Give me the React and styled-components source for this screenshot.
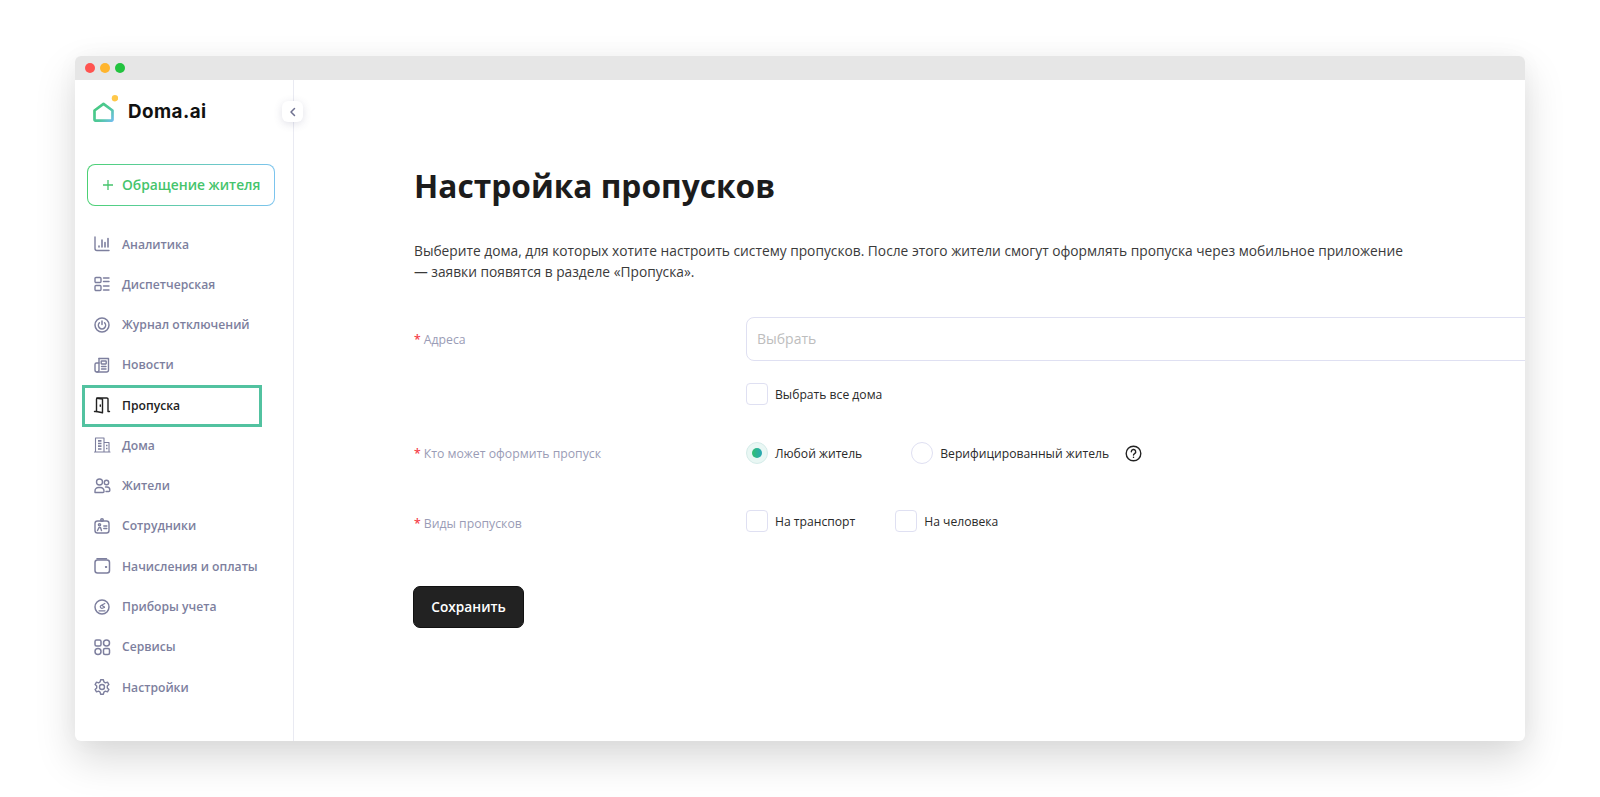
import React from "react";
import styled, { createGlobalStyle } from "styled-components";

const Global = createGlobalStyle`
  html, body { margin: 0; padding: 0; background: #fff; }
  body { font-family: "Open Sans", "Noto Sans", sans-serif; }
  * { box-sizing: border-box; }
`;
const Page = styled.div`
  width: 1600px; height: 797px; padding: 56px 75px 0 75px; overflow: hidden; background: #fff;
`;
const Win = styled.div`
  width: 1450px; height: 685px; border-radius: 6px; background: #fff;
  box-shadow: 0 18px 40px rgba(0,0,0,.15), 0 0 24px rgba(0,0,0,.03);
  display: flex; flex-direction: column;
`;
const TitleBar = styled.div`
  height: 24px; flex: none; background: #e6e6e6; border-radius: 6px 6px 0 0;
  display: flex; align-items: center; gap: 5px; padding-left: 10px;
`;
const Dot = styled.span`
  width: 10px; height: 10px; border-radius: 50%; background: ${p => p.$c};
`;
const Body = styled.div`
  flex: 1; display: flex; min-height: 0; border-radius: 0 0 6px 6px; overflow: hidden;
`;
const Side = styled.aside`
  width: 219px; flex: none; border-right: 1px solid #e9eaf2; padding: 15px 0 0 0; position: relative;
`;
const Logo = styled.div`
  display: flex; align-items: center; height: 33px; padding-left: 18px; gap: 10px;
`;
const LogoText = styled.span`
  font-family: Inter, sans-serif; font-weight: 700; font-size: 18.800px; color: #111; letter-spacing: .45px;
`;
const Collapse = styled.div`
  position: absolute; left: 207px; top: 21px; width: 21px; height: 21px; border-radius: 6px; background: #fff;
  box-shadow: 0 2px 8px rgba(70,70,110,.16); display: flex; align-items: center; justify-content: center; z-index: 2;
`;
const AddBtn = styled.div`
  margin: 36px 0 0 12px; width: 188px; height: 41.500px; border-radius: 8px; border: 1px solid transparent;
  background: linear-gradient(#fff,#fff) padding-box, linear-gradient(90deg,#4cd174,#7cc4ee) border-box;
  display: flex; align-items: center; padding-left: 15px; gap: 9px;
  color: #45c46c; font-size: 13.800px; font-weight: 600;
`;
const Nav = styled.nav`
  margin-top: 18.500px; display: flex; flex-direction: column;
`;
const Item = styled.div`
  height: 40.270px; display: flex; align-items: center; gap: 11px; padding-left: 18px; flex: none; position: relative;
  font-size: 12.150px; font-weight: 600; color: ${p => p.$active ? "#222" : "#7d7f9e"};
  svg { flex: none; color: ${p => p.$active ? "#222" : "#7d7f9e"}; }
`;
const Mark = styled.span`
  position: absolute; left: 7px; top: -0.500px; width: 180px; height: 42px; border: 3px solid #52c2a0;
`;
const Main = styled.main`
  flex: 1; min-width: 0; overflow: hidden; padding: 82px 0 0 120px;
`;
const Title = styled.h1`
  margin: 0; font-size: 31.700px; line-height: 47px; font-weight: 700; color: #1c1c1c; white-space: nowrap;
`;
const Lead = styled.p`
  margin: 31px 0 0; width: 1000px; font-size: 13.760px; line-height: 21px; color: #3a3a3a;
`;
const Row = styled.div`
  display: grid; grid-template-columns: 332px 1fr; margin-top: ${p => p.$mt}px; align-items: ${p => p.$align || "center"};
`;
const Label = styled.label`
  font-size: 12.250px; color: #9a9cb6; font-weight: 400; padding-top: ${p => p.$pt || 0}px;
  b { color: #f5404a; font-weight: 600; margin-right: 3px; }
`;
const Select = styled.div`
  width: 800px; height: 44px; border: 1px solid #dfe0f2; border-radius: 8px; padding: 0 0 2px 10px;
  display: flex; align-items: center; font-size: 14px; color: #bdbdbd;
`;
const Options = styled.div`
  display: flex; align-items: center; gap: ${p => p.$gap || 0}px;
`;
const Opt = styled.span`
  display: inline-flex; align-items: center; gap: 7px; font-size: 12.150px; color: #2a2a2a;
  margin-left: ${p => p.$ml || 0}px;
`;
const Check = styled.span`
  width: 22px; height: 22px; border: 1px solid #dfe0f2; border-radius: 4px; flex: none;
`;
const Radio = styled.span`
  width: 22px; height: 22px; border-radius: 50%; flex: none; display: flex; align-items: center; justify-content: center;
  border: 1px solid ${p => p.$on ? "#d5ece9" : "#dfe0f2"}; background: ${p => p.$on ? "#e9f7f4" : "#fff"};
  &::after { content: ""; display: ${p => p.$on ? "block" : "none"}; width: 10px; height: 10px; border-radius: 50%;
    background: linear-gradient(90deg,#2fbf71,#2aa7b5); }
`;
const Help = styled.svg`
  margin-left: 16px;
`;
const Save = styled.button`
  margin-top: 54px; display: block; width: 111px; height: 41.500px; margin-left: -1px; background: #222; color: #fff; border: 1px solid #111; border-radius: 7px;
  font-family: inherit; font-size: 13.700px; font-weight: 600; padding: 0;
`;

const S = p => (
  <svg width="18" height="18" viewBox="0 0 18 18" fill="none" stroke="currentColor" strokeWidth="1.400" strokeLinecap="round" strokeLinejoin="round" {...p} />
);
const icons = {
  chart: <S><path d="M2 2v11.500a2 2 0 0 0 2 2h12" /><path d="M6 12v-1M9 12V5M12 12V7.500M15 12V3.500" strokeWidth="1.600" /></S>,
  disp: <S><rect x="2" y="2.500" width="6" height="5" rx="1" /><rect x="2" y="10.500" width="6" height="5" rx="1" /><path d="M10.500 3h5.500M10.500 6.500h5.500M10.500 11h5.500M10.500 15h5.500" /></S>,
  power: <S strokeWidth="1.500"><circle cx="9" cy="9" r="7" /><path d="M6.400 6.800a3.600 3.600 0 1 0 5.200 0M9 5v3.500" /></S>,
  news: <S><path d="M6 2.500h9.500v11.500a2 2 0 0 1-2 2H4a2 2 0 0 1-2-2V8.500a1.500 1.500 0 0 1 1.500-1.500H6" /><path d="M6 2.500V14a2 2 0 0 1-2 2" /><rect x="8.200" y="5" width="5" height="3" rx=".4" /><path d="M8.500 10.500h4.500M8.500 13h4.500" /></S>,
  door: <S><path d="M3.500 15.500V3.200A1.200 1.200 0 0 1 4.700 2h9.100A1.200 1.200 0 0 1 15 3.200v12.300h1.500" /><path d="M1.500 15.500h2L9.500 16.800V3L3.800 2.200" /><path d="M7.300 9v1.200" /></S>,
  house: <S strokeWidth="1.100"><path d="M2.500 16V2h8.500V16M11 6.500h5V16M1.500 16h15.500" /><path d="M5 4.800h3.500M5 7.500h3.500M5 10.200h3.500M5 13h3.500M13 9.500h1.500M13 12.500h1.500" strokeWidth="1.700" strokeLinecap="butt" /></S>,
  people: <S><circle cx="6.500" cy="5" r="3" /><circle cx="13.500" cy="5.500" r="2.200" /><path d="M2 15.500v-1.500a3.500 3.500 0 0 1 3.500-3.500h2A3.500 3.500 0 0 1 11 14v.5a1 1 0 0 1-1 1H3" /><path d="M12.500 10h1.500a2.800 2.800 0 0 1 2.800 2.800v.7a1 1 0 0 1-1 1H13" /></S>,
  staff: <S><rect x="2" y="4" width="14" height="12" rx="2.500" /><circle cx="9" cy="3" r="1.300" /><circle cx="6.500" cy="7.800" r="1.100" /><path d="M4.500 13.500l1.500-3h1.500l1 3M10.800 9h3M10.800 11.500h3" /></S>,
  wallet: <S strokeWidth="1.500"><path d="M4 1.800h9.500" /><rect x="2" y="3" width="14.500" height="13" rx="2.500" /><path d="M12.800 10h.5" strokeWidth="1.900" /></S>,
  meter: <S strokeWidth="1.500"><circle cx="9" cy="9" r="7" /><path d="M6 12.800h6M11.800 5.500L8 7.500c-1.500 1-.5 3 1.200 2.800L11.500 9.500M9 7.500l2.500 1.500" strokeWidth="1.200" /></S>,
  apps: <S strokeWidth="1.500"><rect x="2" y="2" width="6" height="6" rx="1.500" /><rect x="10.500" y="2" width="6" height="6" rx="3" /><rect x="2" y="10.500" width="6" height="6" rx="3" /><rect x="10.500" y="10.500" width="6" height="6" rx="1.500" /></S>,
  gear: <S><circle cx="9" cy="9" r="2.500" /><path d="M7.600 1.800h2.800l.5 2.100 1.500.9 2.100-.6 1.400 2.400-1.600 1.500v1.800l1.600 1.500-1.400 2.400-2.100-.6-1.500.9-.5 2.100H7.600l-.5-2.100-1.500-.9-2.100.6-1.400-2.400 1.600-1.500V8.100L2.100 6.600l1.400-2.400 2.100.6 1.500-.9z" /></S>,
};
const nav = [
  ["chart", "Аналитика"], ["disp", "Диспетчерская"], ["power", "Журнал отключений"], ["news", "Новости"],
  ["door", "Пропуска", true], ["house", "Дома"], ["people", "Жители"], ["staff", "Сотрудники"],
  ["wallet", "Начисления и оплаты"], ["meter", "Приборы учета"], ["apps", "Сервисы"], ["gear", "Настройки"],
];

export default function App() {
  return (
    <Page>
      <Global />
      <Win>
        <TitleBar>
          <Dot $c="#ff5450" /><Dot $c="#ffb52e" /><Dot $c="#22c33f" />
        </TitleBar>
        <Body>
          <Side>
            <Logo>
              <svg width="25" height="33" viewBox="0 0 25 33" fill="none">
                <defs>
                  <linearGradient id="lg" gradientUnits="userSpaceOnUse" x1="1" y1="10" x2="20" y2="27">
                    <stop offset="0" stopColor="#45c97e" /><stop offset=".55" stopColor="#4fc89a" /><stop offset="1" stopColor="#74bdf2" />
                  </linearGradient>
                </defs>
                <path d="M1.500 15.500L10.500 8.800 19.500 15.500v9.300a.8.8 0 0 1-.8.8H2.300a.8.8 0 0 1-.8-.8z" stroke="url(#lg)" strokeWidth="2.700" strokeLinejoin="round" />
                <circle cx="22" cy="3.200" r="3.200" fill="#ffc84a" />
              </svg>
              <LogoText>Doma.ai</LogoText>
            </Logo>
            <Collapse>
              <svg width="10" height="10" viewBox="0 0 10 10" fill="none" stroke="#6f7190" strokeWidth="1.500" strokeLinecap="round" strokeLinejoin="round"><path d="M6.500 1.500L3 5l3.500 3.500" /></svg>
            </Collapse>
            <AddBtn>
              <svg width="10" height="10" viewBox="0 0 10 10" stroke="#45c46c" strokeWidth="1.300"><path d="M5 0v10M0 5h10" /></svg>
              Обращение жителя
            </AddBtn>
            <Nav>
              {nav.map(([k, t, a]) => (
                <Item key={t} $active={a}>
                  {a && <Mark />}
                  {icons[k]}
                  {t}
                </Item>
              ))}
            </Nav>
          </Side>
          <Main>
            <Title>Настройка пропусков</Title>
            <Lead>Выберите дома, для которых хотите настроить систему пропусков. После этого жители смогут оформлять пропуска через мобильное приложение — заявки появятся в разделе «Пропуска».</Lead>
            <Row $mt={35}>
              <Label><b>*</b>Адреса</Label>
              <Select>Выбрать</Select>
            </Row>
            <Row $mt={22}>
              <span />
              <Opt><Check />Выбрать все дома</Opt>
            </Row>
            <Row $mt={37}>
              <Label><b>*</b>Кто может оформить пропуск</Label>
              <Options>
                <Opt><Radio $on />Любой житель</Opt>
                <Opt $ml={49}><Radio />Верифицированный житель</Opt>
                <Help width="17" height="17" viewBox="0 0 17 17" fill="none" stroke="#222" strokeWidth="1.400" strokeLinecap="round"><circle cx="8.500" cy="8.500" r="7.300" /><path d="M6.300 6.700a2.200 2.200 0 1 1 3.300 1.900c-.7.400-1.100.8-1.100 1.500" /><path d="M8.500 12.300v.1" /></Help>
              </Options>
            </Row>
            <Row $mt={46} $align="start">
              <Label $pt={5}><b>*</b>Виды пропусков</Label>
              <Options $gap={40}>
                <Opt><Check />На транспорт</Opt>
                <Opt><Check />На человека</Opt>
              </Options>
            </Row>
            <Save>Сохранить</Save>
          </Main>
        </Body>
      </Win>
    </Page>
  );
}
